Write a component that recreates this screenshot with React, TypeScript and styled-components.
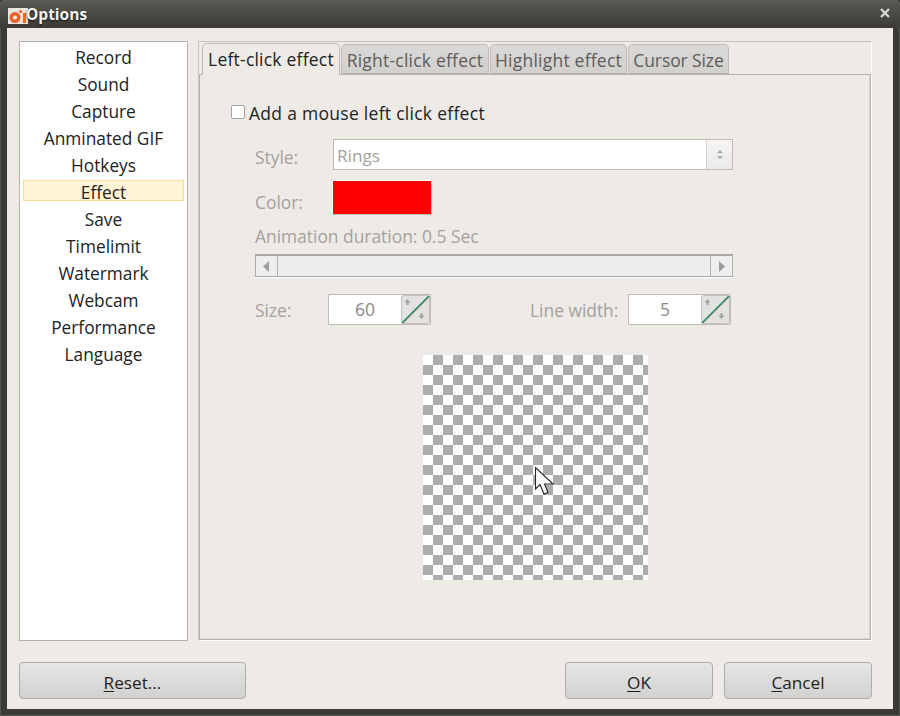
import React from 'react';
import styled, { createGlobalStyle } from 'styled-components';

const GlobalStyle = createGlobalStyle`
  html, body { margin: 0; padding: 0; background: #3a3934; }
  body { font-family: "Open Sans", "Noto Sans", sans-serif; }
`;

const Window = styled.div`
  width: 900px;
  height: 716px;
  box-sizing: border-box;
  display: flex;
  flex-direction: column;
  overflow: hidden;
  background: #3b3a36;
  border-radius: 5px 5px 0 0;
  box-shadow: inset 0 1px 0 #77766f, inset 1px 0 0 #55544f, inset -1px 0 0 #55544f, inset 0 -1px 0 #5a5954;
`;

const TitleBar = styled.div`
  height: 28px;
  flex: none;
  display: flex;
  align-items: center;
  padding: 0 9px 0 8px;
  background: linear-gradient(#5f5e58 0, #55544e 4px, #3c3b37 100%);
  border-radius: 5px 5px 0 0;
`;

const TitleIcon = styled.svg`
  flex: none;
  margin-top: 4px;
`;

const TitleText = styled.span`
  font: bold 15.5px "Open Sans", sans-serif;
  color: #f4f3ee;
  margin-left: -2px;
  margin-top: -1px;
  text-shadow: 0 1px 2px #111;
`;

const CloseButton = styled.svg`
  margin-left: auto;
  margin-top: -3px;
`;

const Client = styled.div`
  flex: 1;
  margin: 0 7px 7px;
  padding: 13px 21px 0 12px;
  background: #eeebe7;
  display: flex;
  flex-direction: column;
`;

const Main = styled.div`
  display: flex;
  gap: 10px;
  height: 600px;
`;

const Sidebar = styled.ul`
  width: 169px;
  box-sizing: border-box;
  margin: 0;
  padding: 3px 3px;
  list-style: none;
  background: #fff;
  border: 1px solid #b5b2ac;
`;

const SideItem = styled.li<{ $active?: boolean }>`
  height: 21px;
  box-sizing: border-box;
  padding-top: 1px;
  line-height: 21px;
  margin-bottom: 6px;
  text-align: center;
  font-size: 17.3px;
  color: #222;
  border: 1px solid ${({ $active }) => ($active ? '#fcd998' : 'transparent')};
  background: ${({ $active }) => ($active ? '#fff4d6' : 'transparent')};
`;

const TabArea = styled.div`
  width: 674px;
  box-sizing: border-box;
  border: 1px solid #fff;
  border-top-color: #c4c1bc;
  border-left-color: #c9c6c1;
  display: flex;
  flex-direction: column;
  padding: 1px 0 0;
`;

const TabBar = styled.div`
  height: 31px;
  flex: none;
  display: flex;
  align-items: flex-end;
  padding-left: 3px;
  position: relative;
  z-index: 1;
`;

const Tab = styled.div<{ $w: number; $ls: number; $active?: boolean }>`
  box-sizing: border-box;
  height: ${({ $active }) => ($active ? '32px' : '30px')};
  margin-bottom: ${({ $active }) => ($active ? '-1px' : '0')};
  width: ${({ $w }) => $w}px;
  margin-right: 1px;
  text-align: center;
  font-size: 17.5px;
  letter-spacing: ${({ $ls }) => $ls}px;
  line-height: 30px;
  white-space: nowrap;
  color: ${({ $active }) => ($active ? '#222' : '#5d5c5a')};
  background: ${({ $active }) => ($active ? '#eeebe7' : 'linear-gradient(#dbd9d8, #d2d0cc)')};
  border: 1px solid #bdbab4;
  border-bottom: ${({ $active }) => ($active ? 'none' : '1px solid #b5b2ac')};
  border-radius: 5px 5px 0 0;
`;

const Pane = styled.div`
  flex: 1;
  box-sizing: border-box;
  border: 1px solid #b5b2ac;
  box-shadow: inset -1px -1px 0 #dad7d2;
  padding: 26px 30px 0 30px;
  display: flex;
  flex-direction: column;
`;

const CheckRow = styled.label`
  display: flex;
  align-items: center;
  gap: 4px;
  height: 24px;
  font-size: 17.5px;
  letter-spacing: 0.28px;
  color: #222;
`;

const CheckBox = styled.span`
  width: 14px;
  height: 14px;
  box-sizing: border-box;
  margin-left: 1px;
  border: 1px solid #a5a29d;
  border-radius: 2px;
  background: #fff;
  margin-top: -3px;
`;

const Form = styled.div`
  margin-left: 25px;
  width: 478px;
  display: flex;
  flex-direction: column;
`;

const DisabledLabel = styled.span`
  font-size: 17.4px;
  color: #a3a19d;
`;

const Row = styled.div<{ $h: number; $mt: number }>`
  display: flex;
  align-items: center;
  height: ${({ $h }) => $h}px;
  margin-top: ${({ $mt }) => $mt}px;
`;

const FieldLabel = styled(DisabledLabel)<{ $dy?: number }>`
  width: 78px;
  flex: none;
  margin-top: ${({ $dy }) => $dy ?? 0}px;
`;

const SelectBox = styled.div`
  width: 400px;
  height: 31px;
  box-sizing: border-box;
  display: flex;
  align-items: center;
  background: #fff;
  border: 1px solid #bdbab4;
  padding-left: 3px;
  font-size: 17.2px;
  color: #a3a19d;
`;

const SelectValue = styled.span`
  margin-top: 1px;
`;

const SelectArrow = styled.div`
  margin-left: auto;
  width: 25px;
  height: 100%;
  display: flex;
  align-items: center;
  justify-content: center;
  border-left: 1px solid #d5d3cf;
  background: linear-gradient(#f6f5f4, #eceae8);
`;

const Swatch = styled.div`
  width: 100px;
  height: 35px;
  box-sizing: border-box;
  background: #f00;
  border: 1px solid #fff;
  border-right-color: #c4c1bc;
  border-bottom-color: #c4c1bc;
  margin: -6px 0 0 -1px;
`;

const ScrollBar = styled.div`
  width: 478px;
  height: 23px;
  box-sizing: border-box;
  display: flex;
  background: #eeeeee;
  border: 1px solid #a9a7a3;
  border-top-width: 2px;
  border-right-color: #b4b2ae;
  box-shadow: 0 1px 0 #fff;
`;

const ScrollButton = styled.div<{ $side: 'left' | 'right' }>`
  width: 21px;
  display: flex;
  align-items: center;
  justify-content: center;
  margin-left: ${({ $side }) => ($side === 'right' ? 'auto' : '0')};
  border-${({ $side }) => ($side === 'right' ? 'left' : 'right')}: 1px solid #b4b2ae;
`;

const SpinLabel = styled(DisabledLabel)<{ $w: number; $ml?: number }>`
  width: ${({ $w }) => $w}px;
  margin-left: ${({ $ml }) => $ml ?? 0}px;
  flex: none;
`;

const SpinBox = styled.div`
  width: 103px;
  height: 31px;
  box-sizing: border-box;
  display: flex;
  background: #fff;
  border: 1px solid #bdbab4;
  border-radius: 1px;
`;

const SpinValue = styled.div`
  flex: 1;
  text-align: center;
  line-height: 28px;
  font-size: 17.5px;
  color: #8a8986;
`;

const SpinButton = styled.svg`
  width: 29px;
  height: 29px;
  flex: none;
`;

const Preview = styled.div`
  width: 225px;
  height: 225px;
  margin: 30px 0 0 193px;
  position: relative;
  background-color: #fff;
  background-image:
    linear-gradient(45deg, #adadad 25%, transparent 25%, transparent 75%, #adadad 75%),
    linear-gradient(45deg, #adadad 25%, transparent 25%, transparent 75%, #adadad 75%);
  background-size: 20px 20px;
  background-position: 0 0, 10px 10px;
`;

const Cursor = styled.svg`
  position: absolute;
  left: 112px;
  top: 112px;
`;

const Footer = styled.div`
  display: flex;
  margin-top: 21px;
`;

const Button = styled.div<{ $w: number; $ml?: string }>`
  width: ${({ $w }) => $w}px;
  height: 37px;
  box-sizing: border-box;
  margin-left: ${({ $ml }) => $ml ?? '0'};
  border: 1px solid #aeaca8;
  border-radius: 4px;
  background: linear-gradient(#e6e6e5, #d1d1d0);
  text-align: center;
  line-height: 39px;
  font-size: 17.2px;
  color: #222;

  u { text-underline-offset: 2px; }
`;

const items = ['Record', 'Sound', 'Capture', 'Anminated GIF', 'Hotkeys', 'Effect', 'Save', 'Timelimit', 'Watermark', 'Webcam', 'Performance', 'Language'];

const tabs = [
  { label: 'Left-click effect', w: 138, ls: 0.22, active: true },
  { label: 'Right-click effect', w: 148, ls: 0.22 },
  { label: 'Highlight effect', w: 137, ls: 0.22 },
  { label: 'Cursor Size', w: 101, ls: -0.1 },
];

const Spinner = ({ value }: { value: string }) => (
  <SpinBox>
    <SpinValue>{value}</SpinValue>
    <SpinButton viewBox="0 0 29 29">
      <rect x="0.5" y="0.5" width="28" height="28" rx="2" fill="#e3e2e0" stroke="#c4c2be" />
      <path d="M1 28 L28 1" stroke="#e8a860" strokeWidth="1" transform="translate(0.8 0.8)" />
      <path d="M1 28 L28 1" stroke="#0f7f6e" strokeWidth="1.5" />
      <path d="M6.5 4 L3.5 7.5 H5.5 V10 H7.5 V7.5 H9.5 Z" fill="#a3a19e" />
      <path d="M20.5 24 L17.5 20.5 H19.5 V18 H21.5 V20.5 H23.5 Z" fill="#a3a19e" />
    </SpinButton>
  </SpinBox>
);

export default function App() {
  return (
    <>
      <GlobalStyle />
      <Window>
        <TitleBar>
          <TitleIcon width="20" height="16" viewBox="0 0 20 16">
            <rect x="0" y="0" width="20" height="16" fill="#e9e5df" />
            <circle cx="7" cy="9.5" r="5.5" fill="#e8622c" />
            <circle cx="7" cy="9.5" r="2" fill="#f7e9dc" />
            <circle cx="12.5" cy="3.5" r="1.6" fill="#e8622c" />
            <rect x="15" y="5" width="3" height="10" fill="#ea6a1e" />
          </TitleIcon>
          <TitleText>Options</TitleText>
          <CloseButton width="12" height="12" viewBox="0 0 12 12">
            <path d="M2 2 L10 10 M10 2 L2 10" stroke="#d9d8d4" strokeWidth="2.4" />
          </CloseButton>
        </TitleBar>
        <Client>
          <Main>
            <Sidebar>
              {items.map((item) => (
                <SideItem key={item} $active={item === 'Effect'}>{item}</SideItem>
              ))}
            </Sidebar>
            <TabArea>
              <TabBar>
                {tabs.map((t) => (
                  <Tab key={t.label} $w={t.w} $ls={t.ls} $active={t.active}>{t.label}</Tab>
                ))}
              </TabBar>
              <Pane>
                <CheckRow><CheckBox />Add a mouse left click effect</CheckRow>
                <Form>
                  <Row $h={31} $mt={14}>
                    <FieldLabel $dy={4}>Style:</FieldLabel>
                    <SelectBox>
                      <SelectValue>Rings</SelectValue>
                      <SelectArrow>
                        <svg width="8" height="11" viewBox="0 0 8 11">
                          <path d="M4 1 L7 4 H1 Z M4 10 L1 7 H7 Z" fill="#a9a7a3" />
                        </svg>
                      </SelectArrow>
                    </SelectBox>
                  </Row>
                  <Row $h={25} $mt={18}>
                    <FieldLabel $dy={2}>Color:</FieldLabel>
                    <Swatch />
                  </Row>
                  <Row $h={24} $mt={11}>
                    <DisabledLabel>Animation duration: 0.5 Sec</DisabledLabel>
                  </Row>
                  <Row $h={23} $mt={6}>
                    <ScrollBar>
                      <ScrollButton $side="left">
                        <svg width="7" height="11" viewBox="0 0 7 11"><path d="M6 0 V11 L0 5.5 Z" fill="#9f9d99" /></svg>
                      </ScrollButton>
                      <ScrollButton $side="right">
                        <svg width="7" height="11" viewBox="0 0 7 11"><path d="M1 0 V11 L7 5.5 Z" fill="#9f9d99" /></svg>
                      </ScrollButton>
                    </ScrollBar>
                  </Row>
                  <Row $h={31} $mt={17}>
                    <SpinLabel $w={73}>Size:</SpinLabel>
                    <Spinner value="60" />
                    <SpinLabel $w={98} $ml={99}>Line width:</SpinLabel>
                    <Spinner value="5" />
                  </Row>
                </Form>
                <Preview>
                  <Cursor width="20" height="29" viewBox="0 0 20 29">
                    <path d="M0.5 0.5 V22 L5 17.5 L9 27 L13 25.5 L9.5 17 H18 Z" fill="#fff" stroke="#23232b" strokeWidth="1.1" />
                  </Cursor>
                </Preview>
              </Pane>
            </TabArea>
          </Main>
          <Footer>
            <Button $w={227}><u>R</u>eset...</Button>
            <Button $w={148} $ml="auto"><u>O</u>K</Button>
            <Button $w={148} $ml="11px"><u>C</u>ancel</Button>
          </Footer>
        </Client>
      </Window>
    </>
  );
}
